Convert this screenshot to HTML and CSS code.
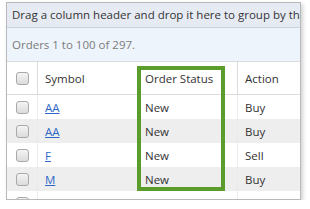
FILE: index.html
```html
<!DOCTYPE html>
<html lang="en">
<head>
    <meta charset="UTF-8">
    <title>Orders grid</title>
    <link rel="stylesheet" href="styles.css">
</head>
<body>
    <div class="frame">
        <!-- Group panel -->
        <div class="group-bar">Drag a column header and drop it here to group by that column</div>

        <!-- Record count -->
        <div class="info-bar">Orders 1 to 100 of 297.</div>

        <!-- Grid -->
        <div class="grid">
            <div class="row header">
                <div class="cell check"><span class="box"></span></div>
                <div class="cell symbol">Symbol</div>
                <div class="cell status">Order Status</div>
                <div class="cell action">Action</div>
            </div>
            <div class="row">
                <div class="cell check"><span class="box"></span></div>
                <div class="cell symbol"><a href="#">AA</a></div>
                <div class="cell status">New</div>
                <div class="cell action">Buy</div>
            </div>
            <div class="row alt">
                <div class="cell check"><span class="box"></span></div>
                <div class="cell symbol"><a href="#">AA</a></div>
                <div class="cell status">New</div>
                <div class="cell action">Buy</div>
            </div>
            <div class="row">
                <div class="cell check"><span class="box"></span></div>
                <div class="cell symbol"><a href="#">F</a></div>
                <div class="cell status">New</div>
                <div class="cell action">Sell</div>
            </div>
            <div class="row alt">
                <div class="cell check"><span class="box"></span></div>
                <div class="cell symbol"><a href="#">M</a></div>
                <div class="cell status">New</div>
                <div class="cell action">Buy</div>
            </div>
            <div class="row">
                <div class="cell check"><span class="box"></span></div>
                <div class="cell symbol"></div>
                <div class="cell status"></div>
                <div class="cell action"></div>
            </div>
        </div>

        <!-- Highlight around the status column -->
        <div class="highlight"></div>
    </div>
</body>
</html>
```

FILE: styles.css
```css
body {
    margin: 0;
    padding: 0;
    background-color: #fff;
    font-family: "Open Sans", "Noto Sans", sans-serif;
    font-size: 11.5px;
    color: #333;
}
.frame {
    position: relative;
    margin: 2px 0 0 6px;
    width: 293px;
    height: 196px;
    border: 1px solid #b9b9b9;
    box-shadow: 2px 2px 4px rgba(0, 0, 0, 0.18);
    overflow: hidden;
}
.group-bar {
    height: 24px;
    line-height: 24px;
    padding-left: 5px;
    white-space: nowrap;
    background-color: #e6ebf3;
    border-bottom: 1px solid #c8d3e0;
}
.info-bar {
    height: 33px;
    line-height: 33px;
    padding-left: 5px;
    background-color: #eef4fb;
    color: #7b7b7b;
}
.grid {
    width: 400px;
}
.row {
    display: flex;
    height: 24px;
    background-color: #fff;
}
.row.alt {
    background-color: #eeeeee;
}
.row.header {
    height: 32px;
    border-top: 1px solid #dcdcdc;
    border-bottom: 1px solid #dcdcdc;
}
.cell {
    display: flex;
    align-items: center;
    padding-left: 7px;
    border-left: 1px solid #ebebeb;
    white-space: nowrap;
}
.header .cell {
    border-left-color: #dcdcdc;
}
.cell.check {
    width: 30px;
    padding-left: 0;
    justify-content: center;
    border-left: none;
}
.cell.symbol {
    width: 92px;
}
.cell.status {
    width: 92px;
    border-left-color: transparent;
}
.cell.action {
    width: 120px;
}
.box {
    width: 11px;
    height: 11px;
    border: 1px solid #a9a9a9;
    border-radius: 3px;
    background: linear-gradient(#f4f4f4, #dcdcdc);
}
.cell a {
    color: #2f68c4;
    text-decoration: underline;
}
.highlight {
    position: absolute;
    left: 130px;
    top: 63px;
    width: 88px;
    height: 125px;
    box-sizing: border-box;
    border: 4px solid #5b9d2b;
}
```
